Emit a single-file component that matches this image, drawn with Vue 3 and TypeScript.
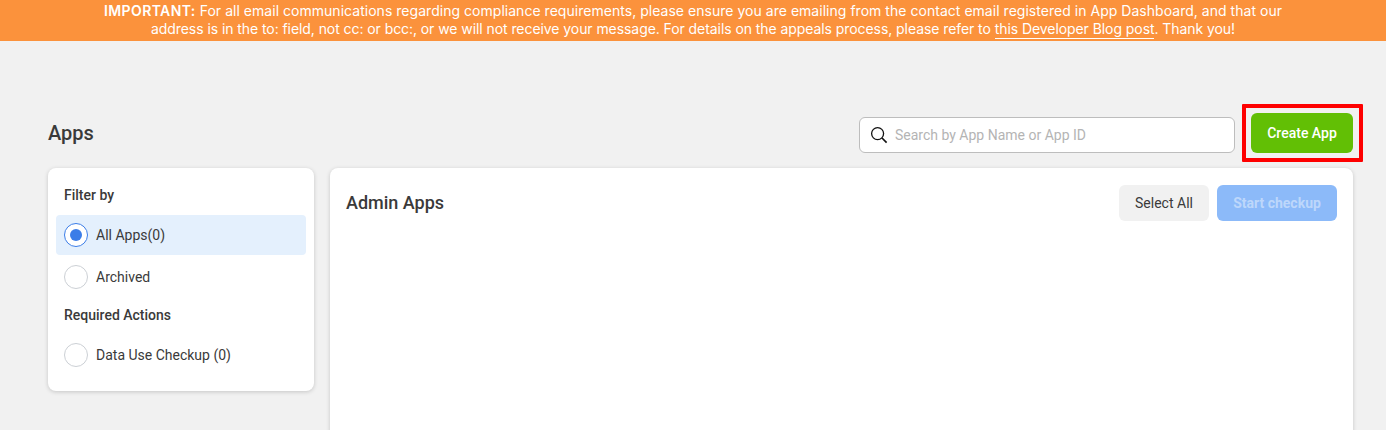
<script setup lang="ts">
interface Filter { label: string; checked: boolean }
const mainFilters: Filter[] = [
  { label: 'All Apps(0)', checked: true },
  { label: 'Archived', checked: false },
]
const actionFilters: Filter[] = [{ label: 'Data Use Checkup (0)', checked: false }]
</script>

<template>
  <div class="page">
    <div class="banner">
      <div class="l1"><b>IMPORTANT:</b> For all email communications regarding compliance requirements, please ensure you are emailing from the contact email registered in App Dashboard, and that our</div>
      <div class="l2">address is in the to: field, not cc: or bcc:, or we will not receive your message. For details on the appeals process, please refer to <a class="link">this Developer Blog post</a>. Thank you!</div>
    </div>
    <main class="content">
      <header class="head">
        <h1>Apps</h1>
        <div class="search">
          <svg width="18" height="18" viewBox="0 0 18 18" fill="none" stroke="#111" stroke-width="1.3">
            <circle cx="7.6" cy="7.6" r="6" />
            <path d="M12 12l4.6 4.6" stroke-width="1.7" />
          </svg>
          <span>Search by App Name or App ID</span>
        </div>
        <div class="create-wrap">
          <button class="create">Create App</button>
          <span class="annot"></span>
        </div>
      </header>
      <div class="columns">
        <aside class="card side">
          <h3>Filter by</h3>
          <div v-for="f in mainFilters" :key="f.label" class="opt" :class="{ on: f.checked }">
            <span class="radio"></span>{{ f.label }}
          </div>
          <h3 class="req">Required Actions</h3>
          <div v-for="f in actionFilters" :key="f.label" class="opt act">
            <span class="radio"></span>{{ f.label }}
          </div>
        </aside>
        <section class="card panel">
          <div class="panel-head">
            <h2>Admin Apps</h2>
            <div class="actions">
              <button class="btn select">Select All</button>
              <button class="btn start">Start checkup</button>
            </div>
          </div>
        </section>
      </div>
    </main>
  </div>
</template>

<style>
html, body { margin: 0; background: #f1f1f1; overflow: hidden; }
</style>

<style scoped>
.page { height: 430px; overflow: hidden; background: #f1f1f1; font-family: Roboto, sans-serif; color: #3a3a3a; }
.banner {
  height: 41px; box-sizing: border-box; background: #fb923c; color: #fff; text-align: center;
  font-family: Inter, sans-serif; font-size: 14px; line-height: 18px; padding-top: 2px; white-space: nowrap;
}
.l1 { letter-spacing: .03px; }
.l2 { letter-spacing: -.07px; }
.banner b { font-weight: 600; letter-spacing: .4px; }
.link { border-bottom: 1px solid #fff; padding-bottom: 1px; }
.content { padding: 0 33px 0 48px; }
.head { display: flex; align-items: flex-start; height: 127px; box-sizing: border-box; padding-top: 72px; }
h1 { margin: 8px auto 0 0; font-size: 20px; line-height: 24px; font-weight: 500; color: #3a3a3a; }
.search {
  width: 376px; height: 36px; box-sizing: border-box; margin-top: 4px; border: 1px solid #bdbdbd; border-radius: 6px; background: #fff;
  display: flex; align-items: center; gap: 7px; padding-left: 10px; font-size: 14px; color: #b4b4b4;
}
.create-wrap { position: relative; margin-left: 16px; }
.create {
  display: block; width: 102px; height: 40px; border: 0; border-radius: 6px; background: #62bf05; color: #fff;
  font: 500 14px Roboto, sans-serif;
}
.annot { position: absolute; left: -9px; top: -9px; width: 121px; height: 58px; box-sizing: border-box; border: 4px solid #fe0000; border-radius: 1px; }
.columns { display: flex; gap: 16px; align-items: flex-start; }
.card { background: #fff; border-radius: 8px; box-shadow: 0 1px 4px rgba(0,0,0,.18); }
.side { width: 266px; height: 223px; box-sizing: border-box; padding: 18px 8px 0; flex: none; }
h3 { margin: 0 8px; font-size: 14px; line-height: 18px; font-weight: 500; color: #3a3a3a; }
.opt { height: 40px; margin-top: 2px; border-radius: 4px; display: flex; align-items: center; padding-left: 8px; gap: 8px; font-size: 14px; }
.opt:first-of-type { margin-top: 11px; }
.opt.on { background: #e4f0fd; }
.radio { width: 22px; height: 22px; border: 1px solid #ccd0d5; border-radius: 50%; background: #fff; position: relative; flex: none; }
.on .radio { border-color: #3b7de8; }
.on .radio::after { content: ""; position: absolute; left: 5px; top: 5px; width: 12px; height: 12px; border-radius: 50%; background: #3b7de8; }
.req { margin-top: 9px; }
.act { margin-top: 11px; }
.panel { flex: 1; height: 300px; padding: 17px 16px 0; box-sizing: border-box; }
.panel-head { display: flex; justify-content: space-between; align-items: center; }
h2 { margin: -2px 0 0; font-size: 18px; font-weight: 500; color: #3a3a3a; }
.actions { display: flex; gap: 8px; }
.btn { height: 36px; border: 0; border-radius: 6px; font: 14px Roboto, sans-serif; }
.select { width: 90px; background: #f1f1f1; color: #3a3a3a; }
.start { width: 120px; background: #8cbaf9; color: #bdd7fb; font-weight: 700; }
</style>
